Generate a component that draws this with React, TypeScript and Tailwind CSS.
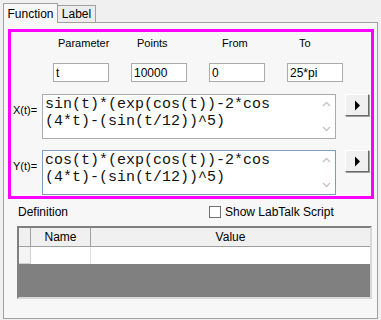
import React from "react";

const xExpr = ["sin(t)*(exp(cos(t))-2*cos", "(4*t)-(sin(t/12))^5)"];
const yExpr = ["cos(t)*(exp(cos(t))-2*cos", "(4*t)-(sin(t/12))^5)"];

const fields = [
  { label: "Parameter", value: "t", pad: "pl-[5px]" },
  { label: "Points", value: "10000", pad: "pl-[6px]" },
  { label: "From", value: "0", pad: "pl-[13px]" },
  { label: "To", value: "25*pi", pad: "pl-[12px]" },
];

function Chevrons() {
  return (
    <div className="flex w-[17px] flex-col items-center justify-between py-[6px]">
      <svg width="9" height="6" viewBox="0 0 9 6">
        <path d="M1 5 L4.5 1.5 L8 5" fill="none" stroke="#c4c4c4" strokeWidth="1.3" />
      </svg>
      <svg width="9" height="6" viewBox="0 0 9 6">
        <path d="M1 1 L4.5 4.5 L8 1" fill="none" stroke="#c4c4c4" strokeWidth="1.3" />
      </svg>
    </div>
  );
}

function ExprRow({
  label,
  lines,
  border,
  top,
}: {
  label: string;
  lines: string[];
  border: string;
  top: string;
}) {
  return (
    <div className={`flex ${top}`}>
      <div className="w-[31px] pl-[2px] pt-[8px]">{label}</div>
      <div className={`flex h-[45px] w-[294px] border bg-white ${border}`}>
        <div className="flex-1 pl-[2px] pt-[1px] font-['Liberation_Mono',monospace] text-[15px] leading-[17px] text-[#111]">
          {lines.map((l) => (
            <div key={l}>{l}</div>
          ))}
        </div>
        <Chevrons />
      </div>
      <div className="ml-[9px] flex h-[22px] w-[24px] items-center justify-center border border-t-white border-l-white border-r-[#696969] border-b-[#696969] bg-[#f0f0f0] shadow-[1px_1px_0_#a0a0a0]">
        <svg width="7" height="11" viewBox="0 0 7 11">
          <path d="M1 0.5 L6 5.5 L1 10.5 Z" fill="#000" />
        </svg>
      </div>
    </div>
  );
}

export default function App() {
  return (
    <div className="h-[320px] w-[381px] bg-[#f0f0f0] px-[3px] pt-[3px] font-['Liberation_Sans',Arial,sans-serif] text-[11px] text-black">
      {/* tabs */}
      <div className="flex h-[19px] items-end">
        <div className="relative z-10 -mb-px flex h-[20px] w-[55px] items-center justify-center border border-b-0 border-[#a0a0a0] bg-[#f7f7f7] text-[12px]">
          Function
        </div>
        <div className="flex h-[17px] w-[38px] items-center justify-center border border-l-0 border-b-0 border-[#a0a0a0] bg-[#ececec] text-[12px]">
          Label
        </div>
      </div>

      {/* panel */}
      <div className="h-[297px] w-[375px] border border-[#a0a0a0] bg-[#f7f7f7] pl-[4px] pt-[6px]">
        <div className="h-[170px] w-[366px] border-[3px] border-[#ff00ff]">
          <div className="flex pl-[42px] pt-[5px]">
            {fields.map((f) => (
              <div key={f.label} className="mr-[22px] w-[56px]">
                <div className={`h-[13px] leading-[13px] ${f.pad}`}>{f.label}</div>
                <div className="mt-[13px] flex h-[19px] items-center border border-[#ababab] bg-white pl-[2px] text-[12px]">
                  {f.value}
                </div>
              </div>
            ))}
          </div>
          <ExprRow label="X(t)=" lines={xExpr} border="border-[#ababab]" top="mt-[12px]" />
          <ExprRow label="Y(t)=" lines={yExpr} border="border-[#7f9db9]" top="mt-[11px]" />
        </div>

        {/* definition */}
        <div className="mt-[6px] flex h-[13px] items-center pl-[10px]">
          <div className="w-[191px] text-[12px]">Definition</div>
          <div className="flex items-center gap-[4px] text-[12px]">
            <div className="h-[12px] w-[12px] border border-[#707070] bg-white" />
            <span>Show LabTalk Script</span>
          </div>
        </div>

        <div className="ml-[9px] mt-[8px] flex h-[73px] w-[355px] flex-col border-2 border-[#808080] border-b-[#d8d8d8] border-r-[#d8d8d8] bg-[#808080]">
          <div className="flex h-[19px] bg-[#f0f0f0] text-[12px]">
            <div className="w-[12px] border-r border-b border-[#a0a0a0]" />
            <div className="flex w-[60px] items-center justify-center border-r border-b border-[#a0a0a0]">
              Name
            </div>
            <div className="flex flex-1 items-center justify-center border-b border-[#a0a0a0]">
              Value
            </div>
          </div>
          <div className="flex h-[17px] bg-white">
            <div className="w-[12px] border-r border-b border-[#d0d0d0] bg-[#f4f4f4]" />
            <div className="w-[60px] border-r border-[#e0e0e0]" />
            <div className="flex-1" />
          </div>
        </div>
      </div>
    </div>
  );
}
